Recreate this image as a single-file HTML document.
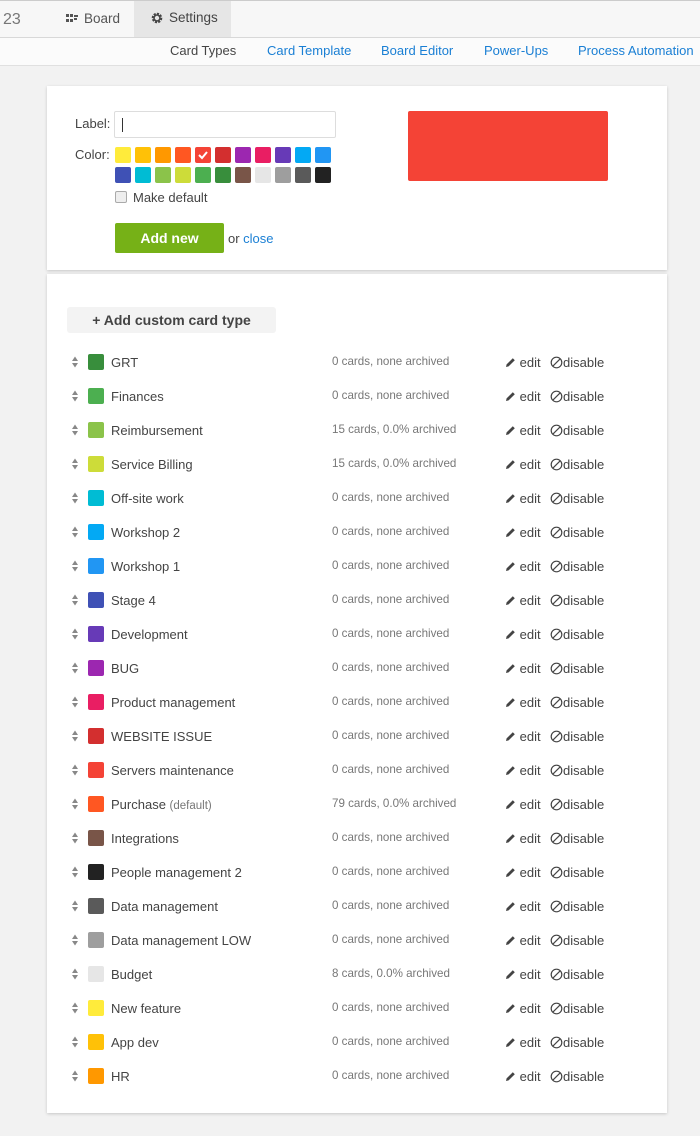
<!DOCTYPE html>
<html><head><meta charset="utf-8"><style>
*{box-sizing:border-box;margin:0;padding:0}
body{width:700px;height:1136px;background:#f2f2f2;font-family:"Liberation Sans",sans-serif;position:relative;overflow:hidden;color:#444}
.a{position:absolute;white-space:nowrap}
.top{position:absolute;left:0;top:0;width:700px;height:38px;background:#f7f7f7;border-top:1px solid #ccc;border-bottom:1px solid #d8d8d8}
.sub{position:absolute;left:0;top:38px;width:700px;height:28px;background:#fbfbfb;border-bottom:1px solid #e0e0e0}
.card{position:absolute;left:47px;width:620px;background:#fff;box-shadow:0 1px 3px rgba(0,0,0,.18)}
.sw{position:absolute;width:16px;height:16px;border-radius:2px}
.lnk{color:#1a7fd4}
.sb{font-size:13px;top:43px}
.row{position:absolute;left:0;width:620px;height:34px}
.row .ar{position:absolute;left:24px;top:10px;width:8px;height:14px}
.row .sq{position:absolute;left:41px;top:9px;width:16px;height:16px;border-radius:2px}
.row .nm{position:absolute;left:64px;top:10px;font-size:13px;color:#444}
.row .nm small{font-size:11.5px;color:#777}
.row .st{position:absolute;left:285px;top:10px;font-size:11.6px;color:#777}
.row .ed{position:absolute;left:458px;top:10px;font-size:13px;color:#444}
.row .ds{position:absolute;left:503px;top:10px;font-size:13px;color:#444}
</style></head><body>
<div class="top"></div>
<div class="a" style="left:3px;top:11px;font-size:16px;color:#777">23</div>
<svg class="a" style="left:66px;top:14px" width="13" height="9"><g fill="#555"><rect x="0" y="0" width="3" height="3"/><rect x="0" y="5" width="3" height="3"/><rect x="4" y="0" width="3" height="3"/><rect x="4" y="5" width="3" height="3"/><rect x="8" y="1" width="4" height="2"/><rect x="8" y="4" width="3" height="2"/></g></svg>
<div class="a" style="left:84px;top:11px;font-size:13.5px;color:#555">Board</div>
<div class="a" style="left:134px;top:1px;width:97px;height:36px;background:#e6e6e6"></div>
<svg class="a" style="left:151px;top:12px" width="12" height="12" viewBox="0 0 12 12"><circle cx="6" cy="6" r="4" fill="none" stroke="#444" stroke-width="2.6" stroke-dasharray="2 1.1"/><circle cx="6" cy="6" r="3" fill="none" stroke="#444" stroke-width="1.6"/></svg>
<div class="a" style="left:169px;top:10px;font-size:13.5px;color:#444">Settings</div>
<div class="sub"></div>
<div class="a sb" style="left:170px;color:#444">Card Types</div>
<div class="a lnk sb" style="left:267px">Card Template</div>
<div class="a lnk sb" style="left:381px">Board Editor</div>
<div class="a lnk sb" style="left:484px">Power-Ups</div>
<div class="a lnk sb" style="left:578px">Process Automation</div>

<div class="card" style="top:86px;height:184px">
 <div class="a" style="left:28px;top:30px;font-size:13px">Label:</div>
 <div class="a" style="left:67px;top:25px;width:222px;height:27px;border:1px solid #ddd;border-radius:2px"><div class="a" style="left:7px;top:6px;width:1px;height:14px;background:#333"></div></div>
 <div class="a" style="left:28px;top:61px;font-size:13px">Color:</div>
 <div class="a" style="left:68px;top:61px;width:220px;height:40px">
  <div class="sw" style="left:0;top:0;background:#ffeb3b"></div><div class="sw" style="left:20px;top:0;background:#ffc107"></div><div class="sw" style="left:40px;top:0;background:#ff9800"></div><div class="sw" style="left:60px;top:0;background:#ff5722"></div><div class="sw" style="left:80px;top:0;background:#f44336"><svg width="16" height="16"><path d="M4 8l3 3 5-6" stroke="#fff" stroke-width="2" fill="none"/></svg></div><div class="sw" style="left:100px;top:0;background:#d32f2f"></div><div class="sw" style="left:120px;top:0;background:#9c27b0"></div><div class="sw" style="left:140px;top:0;background:#e91e63"></div><div class="sw" style="left:160px;top:0;background:#673ab7"></div><div class="sw" style="left:180px;top:0;background:#03a9f4"></div><div class="sw" style="left:200px;top:0;background:#2196f3"></div>
  <div class="sw" style="left:0;top:20px;background:#3f51b5"></div><div class="sw" style="left:20px;top:20px;background:#00bcd4"></div><div class="sw" style="left:40px;top:20px;background:#8bc34a"></div><div class="sw" style="left:60px;top:20px;background:#cddc39"></div><div class="sw" style="left:80px;top:20px;background:#4caf50"></div><div class="sw" style="left:100px;top:20px;background:#388e3c"></div><div class="sw" style="left:120px;top:20px;background:#795548"></div><div class="sw" style="left:140px;top:20px;background:#e6e6e6"></div><div class="sw" style="left:160px;top:20px;background:#9e9e9e"></div><div class="sw" style="left:180px;top:20px;background:#5a5a5a"></div><div class="sw" style="left:200px;top:20px;background:#222"></div>
 </div>
 <div class="a" style="left:68px;top:105px;width:12px;height:12px;border:1px solid #aaa;border-radius:2px;background:#eee"></div>
 <div class="a" style="left:86px;top:104px;font-size:13px">Make default</div>
 <div class="a" style="left:68px;top:137px;width:109px;height:30px;background:#76b117;border-radius:2px;color:#fff;font-weight:bold;font-size:14px;text-align:center;line-height:30px">Add new</div>
 <div class="a" style="left:181px;top:145px;font-size:13px">or <span class="lnk">close</span></div>
 <div class="a" style="left:361px;top:25px;width:200px;height:70px;background:#f44336;border-radius:2px"></div>
</div>

<div class="card" style="top:274px;height:839px">
 <div class="a" style="left:20px;top:33px;width:209px;height:26px;background:#f3f3f3;border-radius:3px;font-weight:bold;font-size:14px;text-align:center;line-height:26px;color:#444">+ Add custom card type</div>
 <div id="rows"></div>
</div>
<script>
var d=[["#388e3c","GRT","0 cards, none archived"],["#4caf50","Finances","0 cards, none archived"],["#8bc34a","Reimbursement","15 cards, 0.0% archived"],["#cddc39","Service Billing","15 cards, 0.0% archived"],["#00bcd4","Off-site work","0 cards, none archived"],["#03a9f4","Workshop 2","0 cards, none archived"],["#2196f3","Workshop 1","0 cards, none archived"],["#3f51b5","Stage 4","0 cards, none archived"],["#673ab7","Development","0 cards, none archived"],["#9c27b0","BUG","0 cards, none archived"],["#e91e63","Product management","0 cards, none archived"],["#d32f2f","WEBSITE ISSUE","0 cards, none archived"],["#f44336","Servers maintenance","0 cards, none archived"],["#ff5722","Purchase <small>(default)</small>","79 cards, 0.0% archived"],["#795548","Integrations","0 cards, none archived"],["#222","People management 2","0 cards, none archived"],["#5a5a5a","Data management","0 cards, none archived"],["#9e9e9e","Data management LOW","0 cards, none archived"],["#e6e6e6","Budget","8 cards, 0.0% archived"],["#ffeb3b","New feature","0 cards, none archived"],["#ffc107","App dev","0 cards, none archived"],["#ff9800","HR","0 cards, none archived"]];
var h="";
d.forEach(function(r,i){h+='<div class="row" style="top:'+(71+34*i)+'px"><svg class="ar" viewBox="0 0 8 14"><path d="M1 6L4 1.5 7 6Z M1 8L4 12.5 7 8Z" fill="#888"/></svg><div class="sq" style="background:'+r[0]+'"></div><div class="nm">'+r[1]+'</div><div class="st">'+r[2]+'</div><div class="ed"><svg width="11" height="11" viewBox="0 0 11 11" style="vertical-align:-1px"><path d="M1 10L1.6 7.4 7.8 1.2 9.8 3.2 3.6 9.4Z" fill="#444"/></svg> edit</div><div class="ds"><svg width="13" height="13" viewBox="0 0 13 13" style="vertical-align:-2px"><circle cx="6.5" cy="6.5" r="5.3" fill="none" stroke="#444" stroke-width="1.2"/><path d="M2.8 10.2L10.2 2.8" stroke="#444" stroke-width="1.2"/></svg>disable</div></div>'});
document.getElementById("rows").innerHTML=h;
</script>
</body></html>
